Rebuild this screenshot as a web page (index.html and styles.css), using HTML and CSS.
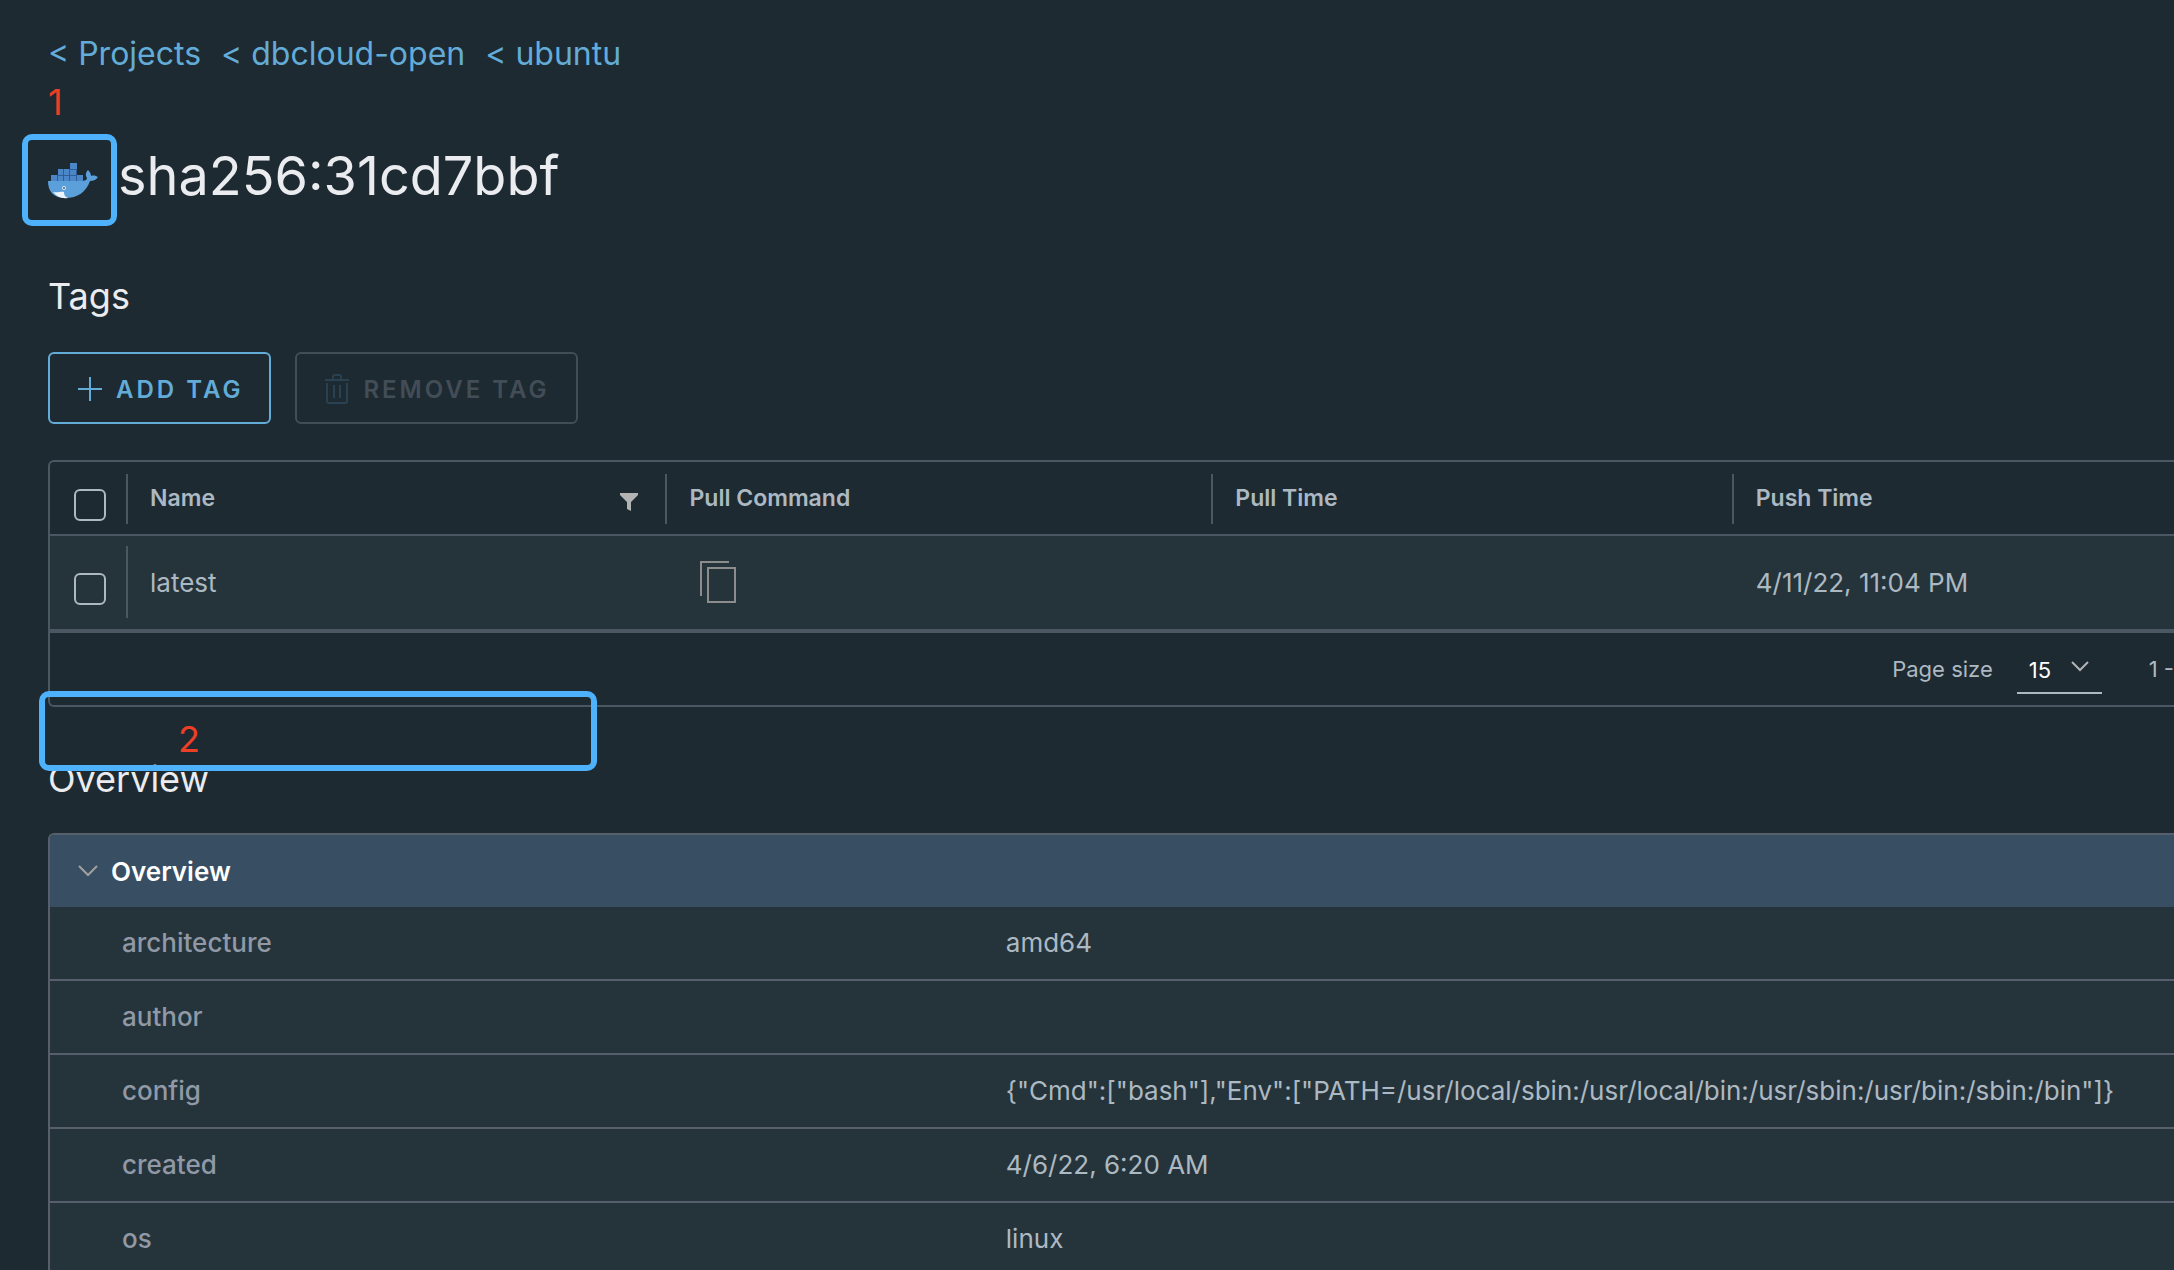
FILE: index.html
```html
<!DOCTYPE html>
<html lang="en">
<head>
    <meta charset="UTF-8">
    <meta name="viewport" content="width=device-width, initial-scale=1.0">
    <title>sha256:31cd7bbf</title>
    <link rel="stylesheet" href="styles.css">
</head>
<body>
    <main class="page">
        <nav class="breadcrumb">
            <a href="#">&lt; Projects</a>
            <a href="#">&lt; dbcloud-open</a>
            <a href="#">&lt; ubuntu</a>
        </nav>

        <header class="artifact-title">
            <svg class="docker-icon" viewBox="0 0 50 36" aria-hidden="true">
                <g fill="#4a86c8">
                    <rect x="22" y="0" width="7" height="7"/>
                    <rect x="10" y="6" width="19" height="7"/>
                    <rect x="3" y="12" width="32" height="7"/>
                </g>
                <path fill="#2d5f96" d="M22 6h7v1h-7zM9 12h20v1H9zM15 6h1v12h-1zM21 6h1v12h-1zM28 6h1v12h-1zM9 12h1v6H9z"/>
                <path fill="#5b9fdb" d="M0 18h33c4 0 6-1 6-3-2-3-1-6 1-8 2 2 3 4 3 6 3-1 5 0 7 1-2 3-5 4-8 4-4 11-12 17-25 17C5 35 0 28 0 18z"/>
                <path fill="#eef3f8" d="M5 29c5 1 9-1 11 0 0 3 1 5 4 6-6 1-11-1-15-6z"/>
                <circle cx="16" cy="25" r="2" fill="#dfeaf4"/>
                <circle cx="16" cy="25" r="1" fill="#47637c"/>
            </svg>
            <h1>sha256:31cd7bbf</h1>
        </header>

        <section class="tags">
            <h2>Tags</h2>
            <div class="actions">
                <button type="button" class="btn">
                    <svg width="24" height="24" viewBox="0 0 24 24" aria-hidden="true">
                        <path d="M12 0v24M0 12h24" fill="none" stroke="currentColor" stroke-width="2"/>
                    </svg>
                    ADD TAG
                </button>
                <button type="button" class="btn" disabled>
                    <svg class="trash" width="24" height="30" viewBox="0 0 24 30" aria-hidden="true">
                        <path d="M0 6h24M8 5V3q0-2 2-2h4q2 0 2 2v2M2 9v18q0 2 2 2h16q2 0 2-2V9M9 11v13M15 11v13" fill="none" stroke="currentColor" stroke-width="2"/>
                    </svg>
                    REMOVE TAG
                </button>
            </div>

            <div class="datagrid">
                <table>
                    <colgroup>
                        <col class="col-check">
                        <col class="col-name">
                        <col class="col-command">
                        <col class="col-pull">
                        <col>
                    </colgroup>
                    <thead>
                        <tr>
                            <th><div class="cell check"><input type="checkbox" aria-label="Select all"></div></th>
                            <th>
                                <div class="cell split">
                                    Name
                                    <svg class="filter" width="18" height="18" viewBox="0 0 18 18" aria-hidden="true">
                                        <path d="M0 0h18v2l-7 7v9l-4-2V9L0 2z" fill="currentColor"/>
                                    </svg>
                                </div>
                            </th>
                            <th><div class="cell split">Pull Command</div></th>
                            <th><div class="cell split">Pull Time</div></th>
                            <th><div class="cell split">Push Time</div></th>
                        </tr>
                    </thead>
                    <tbody>
                        <tr>
                            <td><div class="cell check"><input type="checkbox" aria-label="Select latest"></div></td>
                            <td><div class="cell split">latest</div></td>
                            <td>
                                <div class="cell">
                                    <button type="button" class="copy" aria-label="Copy pull command">
                                        <svg width="36" height="44" viewBox="0 0 36 44" aria-hidden="true">
                                            <path d="M1 36V2h28M8 8h27v34H8z" fill="none" stroke="currentColor" stroke-width="2"/>
                                        </svg>
                                    </button>
                                </div>
                            </td>
                            <td></td>
                            <td><div class="cell">4/11/22, 11:04 PM</div></td>
                        </tr>
                    </tbody>
                </table>
                <footer class="pagination">
                    <label for="page-size">Page size</label>
                    <div class="select">
                        <select id="page-size">
                            <option>15</option>
                            <option>25</option>
                            <option>50</option>
                        </select>
                        <svg width="18" height="12" viewBox="0 0 18 12" aria-hidden="true">
                            <path d="M1 1l8 8 8-8" fill="none" stroke="currentColor" stroke-width="2"/>
                        </svg>
                    </div>
                    <span>1 -</span>
                </footer>
            </div>
        </section>

        <section class="overview">
            <h2>Overview</h2>
            <div class="stack">
                <button type="button" class="stack-header" aria-expanded="true">
                    <svg width="20" height="12" viewBox="0 0 20 12" aria-hidden="true">
                        <path d="M1 1l9 9 9-9" fill="none" stroke="currentColor" stroke-width="2"/>
                    </svg>
                    Overview
                </button>
                <table>
                    <tr><th scope="row">architecture</th><td>amd64</td></tr>
                    <tr><th scope="row">author</th><td></td></tr>
                    <tr><th scope="row">config</th><td>{"Cmd":["bash"],"Env":["PATH=/usr/local/sbin:/usr/local/bin:/usr/sbin:/usr/bin:/sbin:/bin"]}</td></tr>
                    <tr><th scope="row">created</th><td>4/6/22, 6:20 AM</td></tr>
                    <tr><th scope="row">os</th><td>linux</td></tr>
                </table>
            </div>
        </section>

        <!-- review marks on top of the page -->
        <span class="mark-number mark-number-1">1</span>
        <div class="mark-box mark-box-1"></div>
        <div class="mark-box mark-box-2"></div>
        <span class="mark-number mark-number-2">2</span>
    </main>
</body>
</html>
```
FILE: styles.css
```css
* {
    box-sizing: border-box;
}

body {
    margin: 0;
    height: 100vh;
    overflow: hidden;
    background-color: #1e2a31;
    color: #adb9c2;
    font-family: Inter, "Open Sans", sans-serif;
    font-size: 26px;
}

h1, h2 {
    margin: 0;
    font-weight: 400;
    color: #eaecf0;
}

h1 {
    font-size: 54px;
    line-height: 62px;
}

h2 {
    font-size: 36px;
    line-height: 40px;
}

button, select {
    font-family: inherit;
}

table {
    width: 100%;
    table-layout: fixed;
    border-collapse: separate;
    border-spacing: 0;
}

th, td {
    padding: 0;
    text-align: left;
}

.page {
    position: relative;
    padding: 34px 0 0 48px;
}

.breadcrumb {
    display: flex;
    gap: 20px;
    font-size: 32px;
    line-height: 40px;
}

.breadcrumb a {
    color: #63acd8;
    text-decoration: none;
}

.artifact-title {
    display: flex;
    align-items: center;
    gap: 20px;
    margin: 71px 0 69px;
}

.docker-icon {
    width: 50px;
    height: 36px;
    margin-top: 10px;
}

.actions {
    display: flex;
    gap: 24px;
    margin: 36px 0;
}

.btn {
    display: flex;
    align-items: center;
    gap: 14px;
    height: 72px;
    padding: 2px 26px 0 28px;
    border: 2px solid #63acd8;
    border-radius: 6px;
    background: none;
    color: #63acd8;
    font-size: 24px;
    font-weight: 600;
    letter-spacing: 3px;
}

.btn:disabled {
    border-color: #434d57;
    color: #434d57;
}

.trash {
    color: #294150;
}

.datagrid {
    border: 2px solid #4b5864;
    border-right: none;
    border-radius: 6px 0 0 6px;
}

.col-check {
    width: 76px;
}

.col-name {
    width: 25.4%;
}

.col-command {
    width: 25.7%;
}

.col-pull {
    width: 24.5%;
}

.cell {
    display: flex;
    align-items: center;
    justify-content: space-between;
    padding-left: 24px;
}

.split {
    padding-left: 22px;
    border-left: 2px solid #4b5864;
}

thead th {
    padding: 12px 0 10px;
    border-bottom: 2px solid #4b5864;
    font-size: 23px;
    font-weight: 600;
}

thead .cell {
    height: 50px;
    padding-bottom: 2px;
}

tbody .cell {
    height: 72px;
}

.datagrid td {
    padding: 10px 0 11px;
    border-bottom: 4px solid #4b5864;
    background-color: #25343b;
}

.check input {
    appearance: none;
    width: 32px;
    height: 32px;
    margin: 14px 0 0;
    border: 2px solid #adb9c2;
    border-radius: 6px;
}

.filter {
    margin: 8px 27px 0 0;
    color: #b3b3b3;
}

.copy {
    display: flex;
    padding: 0 11px;
    border: none;
    background: none;
    color: #8c8c8c;
}

.pagination {
    display: flex;
    align-items: center;
    justify-content: flex-end;
    height: 72px;
    font-size: 22px;
}

.select {
    position: relative;
    margin: 0 47px 0 24px;
    color: #b3b3b3;
}

.select select {
    appearance: none;
    width: 85px;
    height: 50px;
    padding: 4px 12px 0;
    border: none;
    border-bottom: 2px solid #adb9c2;
    border-radius: 0;
    background: none;
    color: #ffffff;
    font-size: 22px;
}

.select svg {
    position: absolute;
    top: 17px;
    right: 13px;
    pointer-events: none;
}

.overview {
    margin-top: 52px;
}

.stack {
    margin-top: 34px;
    border: 2px solid #565f6b;
    border-right: none;
    border-radius: 6px 0 0 0;
    background-color: #25343b;
}

.stack-header {
    display: flex;
    align-items: center;
    gap: 13px;
    width: 100%;
    height: 72px;
    padding: 0 28px;
    border: none;
    border-radius: 4px 0 0 0;
    background-color: #384e62;
    color: #ffffff;
    font-size: 26px;
    font-weight: 600;
}

.stack-header svg {
    color: #a0a0a0;
}

.stack th, .stack td {
    height: 74px;
    padding-bottom: 2px;
    border-bottom: 2px solid #565f6b;
    white-space: nowrap;
}

.stack th {
    width: 45%;
    padding-left: 72px;
    color: #9099a5;
    font-weight: 500;
}

.mark-box {
    position: absolute;
    border: 6px solid #4db1fb;
    border-radius: 10px;
}

.mark-box-1 {
    top: 134px;
    left: 22px;
    width: 95px;
    height: 92px;
}

.mark-box-2 {
    top: 691px;
    left: 39px;
    width: 558px;
    height: 80px;
}

.mark-number {
    position: absolute;
    color: #ec3f25;
    font-size: 36px;
    line-height: 40px;
}

.mark-number-1 {
    top: 82px;
    left: 48px;
}

.mark-number-2 {
    top: 719px;
    left: 178px;
}
```
